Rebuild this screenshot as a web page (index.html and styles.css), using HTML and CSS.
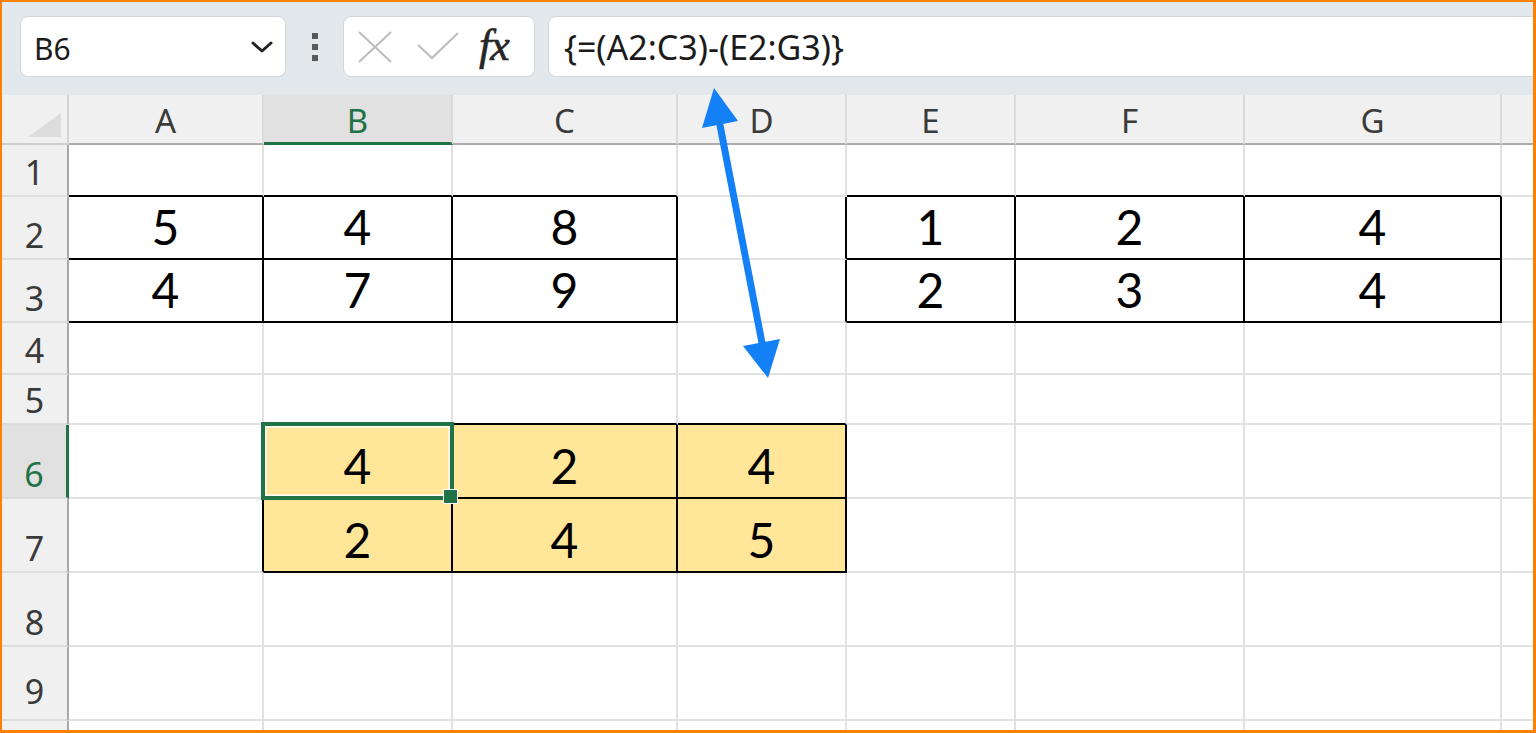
FILE: index.html
```html
<!DOCTYPE html>
<html lang="en">
<head>
<meta charset="utf-8">
<title>Excel array subtraction</title>
<link rel="stylesheet" href="styles.css">
</head>
<body>
<div class="frame">
  <div class="toolbar">
    <div class="namebox">
      <span class="ref">B6</span>
      <svg class="chev" width="22" height="12" viewBox="0 0 22 12"><path d="M2 2 L11 10 L20 2" fill="none" stroke="#222" stroke-width="3" stroke-linejoin="round" stroke-linecap="round"/></svg>
    </div>
    <div class="dots"><i></i><i></i><i></i></div>
    <div class="fxbox">
      <svg class="icon-x" width="34" height="32" viewBox="0 0 34 32"><path d="M1 1 L33 31 M33 1 L1 31" stroke="#bcbcbc" stroke-width="2" fill="none"/></svg>
      <svg class="icon-ok" width="42" height="28" viewBox="0 0 42 28"><path d="M1 13 L15 26 L41 1" stroke="#bcbcbc" stroke-width="2" fill="none"/></svg>
      <span class="fx">fx</span>
    </div>
    <div class="formula">{=(A2:C3)-(E2:G3)}</div>
  </div>
  <div class="sheet">
    <div class="corner"><div class="tri"></div></div>
    <div class="ch">A</div><div class="ch on">B</div><div class="ch">C</div><div class="ch">D</div><div class="ch">E</div><div class="ch">F</div><div class="ch">G</div><div class="ch"></div>

    <div class="rh">1</div>
    <div class="c bb"></div><div class="c bb"></div><div class="c bb"></div><div class="c"></div><div class="c bb"></div><div class="c bb"></div><div class="c bb"></div><div class="c"></div>

    <div class="rh">2</div>
    <div class="c b">5</div><div class="c b">4</div><div class="c b">8</div><div class="c br"></div><div class="c b">1</div><div class="c b">2</div><div class="c b">4</div><div class="c"></div>

    <div class="rh">3</div>
    <div class="c b">4</div><div class="c b">7</div><div class="c b">9</div><div class="c br"></div><div class="c b">2</div><div class="c b">3</div><div class="c b">4</div><div class="c"></div>

    <div class="rh">4</div>
    <div class="c"></div><div class="c"></div><div class="c"></div><div class="c"></div><div class="c"></div><div class="c"></div><div class="c"></div><div class="c"></div>

    <div class="rh">5</div>
    <div class="c"></div><div class="c bb"></div><div class="c bb"></div><div class="c bb"></div><div class="c"></div><div class="c"></div><div class="c"></div><div class="c"></div>

    <div class="rh on">6</div>
    <div class="c br"></div><div class="c b fill sel">4</div><div class="c b fill">2</div><div class="c b fill">4</div><div class="c"></div><div class="c"></div><div class="c"></div><div class="c"></div>

    <div class="rh">7</div>
    <div class="c br"></div><div class="c b fill">2</div><div class="c b fill">4</div><div class="c b fill">5</div><div class="c"></div><div class="c"></div><div class="c"></div><div class="c"></div>

    <div class="rh">8</div>
    <div class="c"></div><div class="c"></div><div class="c"></div><div class="c"></div><div class="c"></div><div class="c"></div><div class="c"></div><div class="c"></div>

    <div class="rh up">9</div>
    <div class="c"></div><div class="c"></div><div class="c"></div><div class="c"></div><div class="c"></div><div class="c"></div><div class="c"></div><div class="c"></div>

    <div class="rh"></div>
    <div class="c"></div><div class="c"></div><div class="c"></div><div class="c"></div><div class="c"></div><div class="c"></div><div class="c"></div><div class="c"></div>
  </div>
  <svg class="arrow" width="1536" height="733" viewBox="0 0 1536 733">
    <line x1="719" y1="120" x2="763" y2="348" stroke="#1480f6" stroke-width="7"/>
    <polygon points="714,88 702,128 738,121" fill="#1480f6"/>
    <polygon points="768,378 743,346 780,339" fill="#1480f6"/>
  </svg>
</div>
</body>
</html>
```
FILE: styles.css
```css
* { box-sizing: border-box; margin: 0; padding: 0; }
html, body { width: 1536px; height: 733px; overflow: hidden; background: #fff; }

.frame {
  position: relative;
  width: 1536px;
  height: 733px;
  border: solid #ff8000;
  border-width: 2px 3px 3px 2px;
  overflow: hidden;
  display: flex;
  flex-direction: column;
  font-family: "Noto Sans", "Open Sans", sans-serif;
}

/* ---------- toolbar ---------- */
.toolbar {
  height: 93px;
  flex: none;
  background: #e3e8ec;
  display: flex;
  align-items: flex-start;
  padding: 14px 0 0 18px;
}
.namebox, .fxbox, .formula {
  height: 61px;
  background: #fff;
  border: 1.5px solid #d3d7db;
  border-radius: 8px;
}
.namebox {
  width: 266px;
  flex: none;
  display: flex;
  align-items: center;
  justify-content: space-between;
  padding: 4px 12px 0 13px;
}
.namebox .ref { font-size: 30px; color: #1b1b1b; line-height: 1; }
.chev { margin-top: -4px; }

.dots {
  width: 57px;
  height: 61px;
  flex: none;
  display: flex;
  flex-direction: column;
  align-items: center;
  justify-content: center;
  gap: 5px;
}
.dots i { display: block; width: 6px; height: 6px; background: #595959; }

.fxbox {
  width: 192px;
  flex: none;
  display: flex;
  align-items: center;
  padding-left: 14px;
}
.icon-x { flex: none; }
.icon-ok { flex: none; margin-left: 25px; margin-top: -2px; }
.fx {
  margin-left: 20px;
  font-family: "Liberation Serif", "DejaVu Serif", serif;
  font-style: italic;
  font-size: 44px;
  color: #262626;
  line-height: 1;
  margin-top: -2px;
  letter-spacing: -1px;
  -webkit-text-stroke: 0.6px #262626;
}
.formula {
  flex: 1;
  margin-left: 13px;
  margin-right: -20px;
  display: flex;
  align-items: center;
  padding-left: 15px;
  font-size: 34px;
  color: #1b1b1b;
  line-height: 1;
}

/* ---------- sheet ---------- */
.sheet {
  flex: 1;
  display: grid;
  grid-template-columns: 67px 195px 189px 225px 169px 169px 229px 257px 100px;
  grid-template-rows: 50px 52px 63px 63px 52px 50px 74px 74px 74px 74px 74px;
  overflow: hidden;
}
.corner {
  background: #f0f0f0;
  border-right: 2px solid #d4d4d4;
  border-bottom: 2px solid #cfcfcf;
  display: flex;
  justify-content: flex-end;
  align-items: flex-end;
  padding: 0 6px 6px 0;
}
.tri {
  width: 33px;
  height: 24px;
  background: #dcdcdc;
  clip-path: polygon(0 100%, 100% 0, 100% 100%);
}
.ch {
  background: #f0f0f0;
  border-right: 2px solid #dadada;
  border-bottom: 2px solid #acacac;
  display: flex;
  align-items: center;
  justify-content: center;
  padding-top: 3px;
  font-size: 33px;
  line-height: 1;
  color: #3a3a3a;
}
.ch.on {
  background: #e1e1e1;
  color: #217346;
  border-bottom: 3px solid #217346;
}
.rh {
  background: #f0f0f0;
  border-right: 2px solid #a9a9a9;
  border-bottom: 2px solid #dcdcdc;
  display: flex;
  align-items: flex-end;
  justify-content: center;
  padding-bottom: 6px;
  font-size: 34px;
  line-height: 1;
  color: #3a3a3a;
}
.rh.up { padding-bottom: 11px; }
.rh.on {
  background: #e1e1e1;
  color: #217346;
  border-right: 3px solid #217346;
}
.c {
  border-right: 2px solid #e1e1e1;
  border-bottom: 2px solid #e1e1e1;
  display: flex;
  align-items: flex-end;
  justify-content: center;
  padding-bottom: 7px;
  font-family: "Lato", "Noto Sans", sans-serif;
  font-size: 48px;
  line-height: 1;
  color: #000;
}
.c.b { border-right-color: #000; border-bottom-color: #000; }
.c.bb { border-bottom-color: #000; }
.c.br { border-right-color: #000; }
.c.fill { background: #ffe699; }

.sel { position: relative; }
.sel::after {
  content: "";
  position: absolute;
  left: -3px;
  top: -3px;
  right: -3px;
  bottom: -3px;
  border: 4px solid #217346;
  box-shadow: inset 0 0 0 1.5px #fff;
  z-index: 2;
}
.sel::before {
  content: "";
  position: absolute;
  right: -7px;
  bottom: -7px;
  width: 13px;
  height: 13px;
  background: #217346;
  border: 1.5px solid #fff;
  z-index: 3;
}

.arrow {
  position: absolute;
  left: -2px;
  top: -2px;
  pointer-events: none;
  z-index: 5;
}
```
